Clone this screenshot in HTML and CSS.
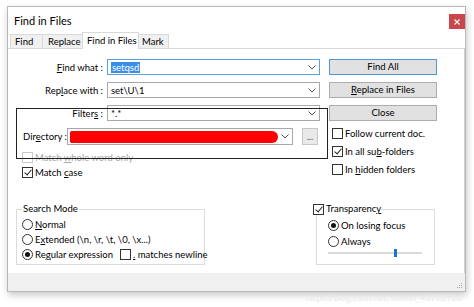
FILE: index.html
```html
<!DOCTYPE html>
<html lang="en">
<head>
  <meta charset="UTF-8" />
  <title>Find in Files</title>
  <link rel="stylesheet" href="styles.css">
</head>
<body>

<div class="dialog">
  <!-- title bar -->
  <div class="titlebar">
    <span class="title">Find in Files</span>
    <span class="close">
      <svg width="6" height="6" viewBox="0 0 6 6"><path d="M0.5 0.5 L5.5 5.5 M5.5 0.5 L0.5 5.5" stroke="#fff" stroke-width="1.1"/></svg>
    </span>
  </div>

  <!-- tabs -->
  <div class="tabs">
    <span class="tab">Find</span>
    <span class="tab">Replace</span>
    <span class="tab active">Find in Files</span>
    <span class="tab">Mark</span>
  </div>

  <div class="panel">
    <div class="mark-box"></div>

    <div class="main">
      <div class="left">
        <div class="row">
          <span class="lbl"><u>F</u>ind what :</span>
          <div class="combo focus">
            <span class="val"><span class="sel">setqsd</span></span>
            <svg class="chev" width="8" height="5" viewBox="0 0 8 5"><path d="M0.5 0.5 L4 4 L7.5 0.5" fill="none" stroke="#555" stroke-width="1"/></svg>
          </div>
        </div>
        <div class="row">
          <span class="lbl">Rep<u>l</u>ace with :</span>
          <div class="combo">
            <span class="val">set\U\1</span>
            <svg class="chev" width="8" height="5" viewBox="0 0 8 5"><path d="M0.5 0.5 L4 4 L7.5 0.5" fill="none" stroke="#555" stroke-width="1"/></svg>
          </div>
        </div>
        <div class="row">
          <span class="lbl">Filter<u>s</u> :</span>
          <div class="combo">
            <span class="val">*.*</span>
            <svg class="chev" width="8" height="5" viewBox="0 0 8 5"><path d="M0.5 0.5 L4 4 L7.5 0.5" fill="none" stroke="#555" stroke-width="1"/></svg>
          </div>
        </div>
        <div class="row dir-row">
          <span class="dir-lbl">Dir<u>e</u>ctory :</span>
          <div class="combo dir">
            <span class="scribble"></span>
            <svg class="chev" width="8" height="5" viewBox="0 0 8 5"><path d="M0.5 0.5 L4 4 L7.5 0.5" fill="none" stroke="#555" stroke-width="1"/></svg>
          </div>
          <span class="dots">...</span>
        </div>
        <div class="check left-check disabled"><span class="box"></span><span>Match <u>w</u>hole word only</span></div>
        <div class="check left-check second"><span class="box checked"></span><span>Match <u>c</u>ase</span></div>
      </div>

      <div class="right">
        <div class="btn default">Find All</div>
        <div class="btn"><u>R</u>eplace in Files</div>
        <div class="btn">Close</div>
        <div class="check follow"><span class="box"></span><span>Follow current doc.</span></div>
        <div class="check"><span class="box checked"></span><span>In all su<u>b</u>-folders</span></div>
        <div class="check"><span class="box"></span><span>In <u>h</u>idden folders</span></div>
      </div>
    </div>

    <div class="groups">
      <fieldset class="group search">
        <legend>Search Mode</legend>
        <div class="radio"><span class="dot"></span><span><u>N</u>ormal</span></div>
        <div class="radio"><span class="dot"></span><span>E<u>x</u>tended (\n, \r, \t, \0, \x...)</span></div>
        <div class="radio"><span class="dot on"></span><span>Re<u>g</u>ular expression</span>
          <span class="check inline"><span class="box"></span><span><u>.</u> matches newline</span></span>
        </div>
      </fieldset>

      <fieldset class="group transp">
        <legend><span class="check"><span class="box checked"></span><span>Transparenc<u>y</u></span></span></legend>
        <div class="radio"><span class="dot on"></span><span>On losing focus</span></div>
        <div class="radio"><span class="dot"></span><span>Always</span></div>
        <div class="slider"><span class="thumb"></span></div>
      </fieldset>
    </div>
  </div>

  <div class="footer">
    <svg class="grip" width="7" height="7" viewBox="0 0 7 7">
      <rect x="5" y="1" width="1" height="1" fill="#aaa"/>
      <rect x="3" y="3" width="1" height="1" fill="#aaa"/><rect x="5" y="3" width="1" height="1" fill="#aaa"/>
      <rect x="1" y="5" width="1" height="1" fill="#aaa"/><rect x="3" y="5" width="1" height="1" fill="#aaa"/><rect x="5" y="5" width="1" height="1" fill="#aaa"/>
    </svg>
  </div>
</div>

<div class="watermark">https://blog.csdn.net/weixin_43702920</div>

</body>
</html>
```

FILE: styles.css
```css
body {
  margin: 0;
  background: #fff;
  font-family: Lato, 'Open Sans', sans-serif;
  font-size: 9.5px;
  color: #000;
}
u { text-decoration: underline; text-underline-offset: 1px; }

.dialog {
  margin: 6px 0 0 7px;
  width: 459px;
  height: 286px;
  box-sizing: border-box;
  border: 1px solid #b9b9b9;
  background: #fff;
  box-shadow: 1px 3px 7px rgba(0,0,0,0.22);
  display: flex;
  flex-direction: column;
}

.titlebar {
  height: 25px;
  display: flex;
  align-items: flex-start;
  justify-content: space-between;
}
.title {
  font-size: 11px;
  margin: 7px 0 0 6px;
}
.close {
  width: 16px;
  height: 15px;
  margin: 7px 0 0 0;
  background: #c9474a;
  display: flex;
  align-items: center;
  justify-content: center;
}

.tabs {
  height: 16px;
  display: flex;
  align-items: flex-end;
  padding-left: 2px;
  position: relative;
  z-index: 1;
}
.tab {
  height: 14px;
  line-height: 14px;
  border: 1px solid #d9d9d9;
  border-bottom: none;
  background: #f0f0f0;
  margin-right: -1px;
  box-sizing: border-box;
  white-space: nowrap;
  padding-left: 4px;
}
.tab:nth-child(1) { width: 33px; }
.tab:nth-child(2) { width: 41px; padding-left: 5px; }
.tab:nth-child(4) { width: 31px; padding-left: 3px; }
.tab.active {
  height: 17px;
  width: 57px;
  background: #fff;
  margin-bottom: -1px;
  line-height: 15px;
  padding-left: 4px;
}

.panel {
  height: 225px;
  border-top: 1px solid #d9d9d9;
  border-right: 1px solid #d0d0d0;
  position: relative;
  box-sizing: border-box;
}
.mark-box {
  position: absolute;
  left: 8px;
  top: 59px;
  width: 310px;
  height: 49px;
  border: 1px solid #222;
  z-index: 2;
  pointer-events: none;
}

.main {
  display: flex;
  padding-top: 10px;
}
.left { width: 312px; }
.right { width: 108px; margin-left: 9px; }

.row {
  display: flex;
  align-items: center;
  height: 16px;
  margin-bottom: 7px;
}
.lbl {
  width: 99px;
  padding-right: 4px;
  box-sizing: border-box;
  text-align: right;
}
.combo {
  width: 213px;
  height: 16px;
  box-sizing: border-box;
  border: 1px solid #a9a9a9;
  background: #fff;
  display: flex;
  align-items: center;
  justify-content: space-between;
  padding: 0 3px 0 3px;
}
.combo.focus { border-color: #5aa0df; }
.sel {
  background: #3a8ee6;
  color: #fff;
  padding: 0 1px;
}
.chev { flex: none; }

.dir-row {
  height: 17px;
  padding-left: 15px;
}
.dir-lbl { width: 44px; }
.combo.dir {
  width: 226px;
  height: 17px;
  padding-left: 2px;
}
.scribble {
  width: 208px;
  height: 12px;
  background: #ff0000;
  border-radius: 2px 7px 7px 2px;
}
.dots {
  width: 16px;
  height: 17px;
  margin-left: 9px;
  box-sizing: border-box;
  border: 1px solid #c6c6c6;
  background: #e9e9e9;
  color: #555;
  text-align: center;
  line-height: 15px;
}

.check {
  display: flex;
  align-items: center;
  height: 11px;
  white-space: nowrap;
}
.box {
  width: 11px;
  height: 11px;
  box-sizing: border-box;
  border: 1px solid #333;
  background: #fff;
  margin-right: 2px;
  flex: none;
  position: relative;
}
.box.checked::after {
  content: "";
  position: absolute;
  left: 3px;
  top: 0px;
  width: 3px;
  height: 6px;
  border: solid #222;
  border-width: 0 1px 1px 0;
  transform: rotate(40deg);
}
.left-check { padding-left: 14px; }
.left-check.second { margin-top: 4px; }
.disabled { color: #a8a8a8; }
.disabled .box { border-color: #c8c8c8; }

.btn {
  height: 16px;
  box-sizing: border-box;
  border: 1px solid #adadad;
  background: #e1e1e1;
  text-align: center;
  line-height: 14px;
  margin-bottom: 7px;
}
.btn.default { border-color: #4a97db; }
.right .check { margin-left: 3px; margin-bottom: 7px; }
.right .follow { margin-top: 4px; }

.groups {
  display: flex;
  margin-top: 21px;
}
.group {
  margin: 0;
  padding: 0;
  border: 1px solid #dcdcdc;
  min-width: 0;
  box-sizing: border-box;
  height: 62px;
}
.group legend {
  padding: 0 1px;
  line-height: 12px;
}
.search {
  margin-left: 8px;
  width: 189px;
  padding-left: 5px;
  padding-top: 4px;
}
.transp {
  margin-left: 111px;
  width: 119px;
  padding-left: 11px;
  padding-top: 5px;
}
.transp legend { margin-left: -15px; padding: 0; }
.transp legend .check { height: 12px; }

.radio {
  display: flex;
  align-items: center;
  height: 11px;
  margin-bottom: 4px;
  white-space: nowrap;
}
.transp .radio { margin-bottom: 5px; }
.dot {
  width: 11px;
  height: 11px;
  box-sizing: border-box;
  border: 1px solid #333;
  border-radius: 50%;
  margin-right: 2px;
  flex: none;
  display: flex;
  align-items: center;
  justify-content: center;
}
.dot.on::after {
  content: "";
  width: 5px;
  height: 5px;
  border-radius: 50%;
  background: #111;
}
.check.inline { margin-left: 7px; }

.slider {
  width: 94px;
  height: 2px;
  background: #dadada;
  margin-top: 4px;
  position: relative;
}
.thumb {
  position: absolute;
  left: 66px;
  top: -3px;
  width: 3px;
  height: 8px;
  background: #1a74d8;
}

.footer {
  flex: 1;
  background: #f0f0f0;
  display: flex;
  justify-content: flex-end;
  align-items: flex-end;
  padding: 0 2px 2px 0;
}

.watermark {
  text-align: right;
  width: 462px;
  color: #eaeaea;
  font-size: 9px;
}
```
